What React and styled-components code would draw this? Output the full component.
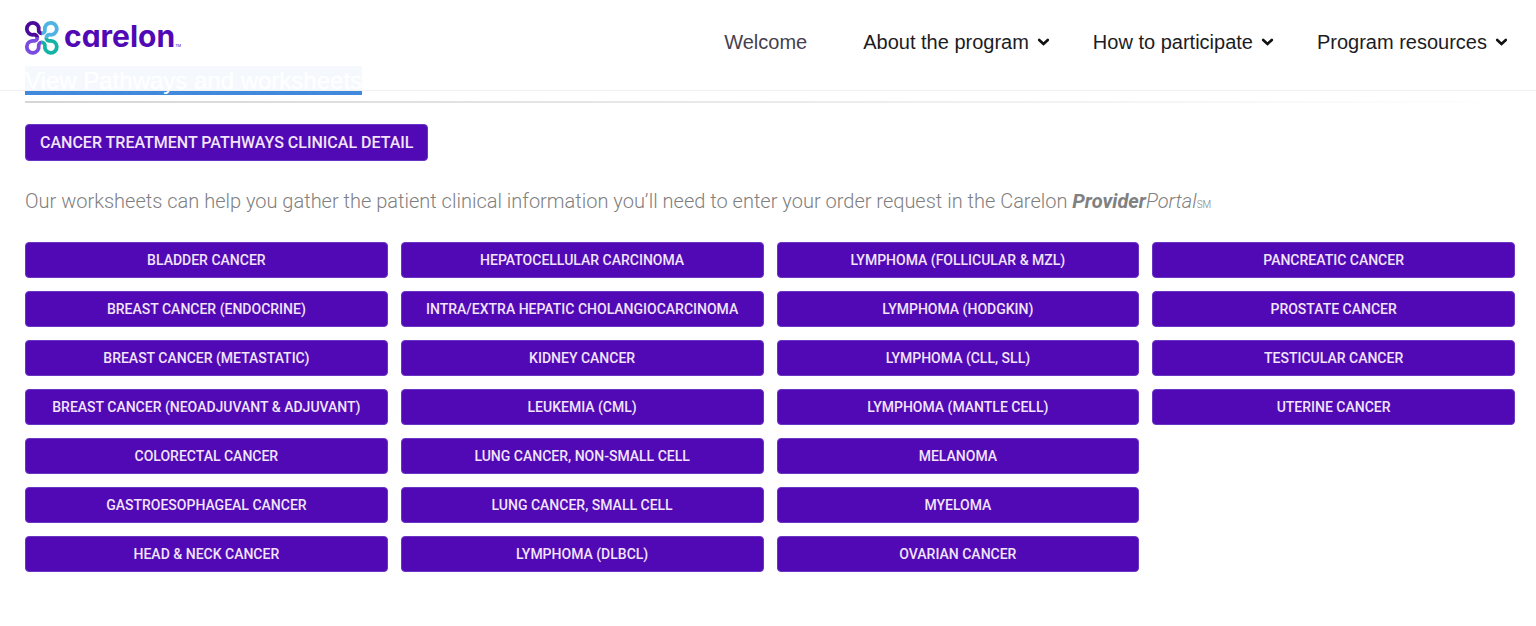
import styled, { createGlobalStyle } from 'styled-components';

const GlobalStyle = createGlobalStyle`
    * {
        box-sizing: border-box;
    }

    body {
        margin: 0;
        background-color: #fff;
        font-family: Roboto, sans-serif;
    }
`;

const Container = styled.div`
    position: relative;
`;

const Header = styled.header`
    position: absolute;
    top: 0;
    left: 0;
    right: 0;
    height: 91px;
    padding: 0 28px 0 24px;
    display: flex;
    justify-content: space-between;
    background-color: rgba(255, 255, 255, 0.95);
    border-bottom: 1px solid #f1f1f1;
`;

const Brand = styled.a`
    display: flex;
    height: 36px;
    margin-top: 20px;
    color: #5009b5;
    text-decoration: none;
`;

const BrandName = styled.span`
    margin-left: 4px;
    font-family: Inter, sans-serif;
    font-size: 30px;
    font-weight: 700;
    line-height: 32px;
    font-feature-settings: 'cv11';
`;

const Trademark = styled.span`
    align-self: flex-end;
    font-size: 4px;
    line-height: 20px;
`;

const Nav = styled.nav`
    display: flex;
    align-items: center;
    height: 83px;
`;

const NavLink = styled.a`
    display: flex;
    align-items: center;
    gap: 8px;
    margin-left: ${(props) => (props.$wide ? '56px' : '43px')};
    font-family: 'Liberation Sans', Arial, sans-serif;
    font-size: 20px;
    line-height: 24px;
    color: ${(props) => (props.$current ? '#44414f' : '#1c1c1f')};
    text-decoration: none;
`;

const Main = styled.main`
    padding: 66px 21px 55px 25px;
`;

const Title = styled.h1`
    width: fit-content;
    margin: 0;
    font-family: 'Liberation Sans', Arial, sans-serif;
    font-size: 24px;
    font-weight: 400;
    line-height: 29px;
    color: #fff;
    background-color: #4189dd;
`;

const Divider = styled.div`
    height: 2px;
    margin: 6px 0 21px;
    background: linear-gradient(90deg, #d6d6d6, #fff);
`;

const Button = styled.button`
    height: 36px;
    padding: 0 8px;
    border: 1px solid #6a35c4;
    border-radius: 4px;
    background-color: #5009b5;
    color: #f3e3fb;
    font-family: Roboto, sans-serif;
    font-size: 14px;
    font-weight: 500;
    text-transform: uppercase;
    cursor: pointer;

    &:hover {
        background-color: #42079a;
    }
`;

const DetailButton = styled(Button)`
    height: 37px;
    padding: 0 14px;
    font-size: 16px;
`;

const Text = styled.p`
    margin: 26px 0 23px;
    font-size: 20px;
    font-weight: 300;
    line-height: 28px;
    color: #808080;

    b {
        font-weight: 700;
    }
`;

const Mark = styled.span`
    font-size: 10px;
`;

const Grid = styled.div`
    display: grid;
    grid-template-columns: repeat(4, 1fr);
    align-items: start;
    gap: 13px;
`;

const Column = styled.div`
    display: flex;
    flex-direction: column;
    gap: 13px;
`;

const links = [
    { label: 'Welcome', current: true },
    { label: 'About the program', menu: true, wide: true },
    { label: 'How to participate', menu: true },
    { label: 'Program resources', menu: true },
];

const columns = [
    [
        'Bladder Cancer',
        'Breast Cancer (Endocrine)',
        'Breast Cancer (Metastatic)',
        'Breast Cancer (Neoadjuvant & Adjuvant)',
        'Colorectal Cancer',
        'Gastroesophageal Cancer',
        'Head & Neck Cancer',
    ],
    [
        'Hepatocellular Carcinoma',
        'Intra/Extra Hepatic Cholangiocarcinoma',
        'Kidney Cancer',
        'Leukemia (CML)',
        'Lung Cancer, Non-Small Cell',
        'Lung Cancer, Small Cell',
        'Lymphoma (DLBCL)',
    ],
    [
        'Lymphoma (Follicular & MZL)',
        'Lymphoma (Hodgkin)',
        'Lymphoma (CLL, SLL)',
        'Lymphoma (Mantle Cell)',
        'Melanoma',
        'Myeloma',
        'Ovarian Cancer',
    ],
    [
        'Pancreatic Cancer',
        'Prostate Cancer',
        'Testicular Cancer',
        'Uterine Cancer',
    ],
];

// one loop of the clover, turned once for each colour
const loop =
    'M-4.5 0A3.1 3.1 0 0 0 -8.08 -3.07A6 6 0 1 1 -3.07 -8.08A3.1 3.1 0 0 0 0 -4.5';

const Logo = () => (
    <svg width='36' height='36' viewBox='0 0 36 36' fill='none' strokeWidth='3.8'>
        <g transform='translate(17.8 17.8)'>
            <path d={loop} stroke='#4b0a9c' />
            <path d={loop} stroke='#4fb3e3' transform='rotate(90)' />
            <path d={loop} stroke='#14b3a6' transform='rotate(180)' />
            <path d={loop} stroke='#7a4be0' transform='rotate(270)' />
        </g>
    </svg>
);

const Chevron = () => (
    <svg width='13' height='8' viewBox='0 0 13 8' fill='none'>
        <path
            d='M2.200 2L6.500 6L10.800 2'
            stroke='#111'
            strokeWidth='2.600'
            strokeLinecap='round'
        />
    </svg>
);

const App = () => {
    return (
        <Container>
            <GlobalStyle />
            <Main>
                <Title>View Pathways and worksheets</Title>
                <Divider />
                <DetailButton>Cancer Treatment Pathways Clinical Detail</DetailButton>
                <Text>
                    Our worksheets can help you gather the patient clinical
                    information you’ll need to enter your order request in the
                    Carelon{' '}
                    <em>
                        <b>Provider</b>Portal
                    </em>
                    <Mark>SM</Mark>
                </Text>
                <Grid>
                    {columns.map((items) => (
                        <Column key={items[0]}>
                            {items.map((item) => (
                                <Button key={item}>{item}</Button>
                            ))}
                        </Column>
                    ))}
                </Grid>
            </Main>
            <Header>
                <Brand href='#'>
                    <Logo />
                    <BrandName>carelon</BrandName>
                    <Trademark>TM</Trademark>
                </Brand>
                <Nav>
                    {links.map((link) => (
                        <NavLink
                            key={link.label}
                            href='#'
                            $current={link.current}
                            $wide={link.wide}
                        >
                            {link.label}
                            {link.menu && <Chevron />}
                        </NavLink>
                    ))}
                </Nav>
            </Header>
        </Container>
    );
};

export default App;
